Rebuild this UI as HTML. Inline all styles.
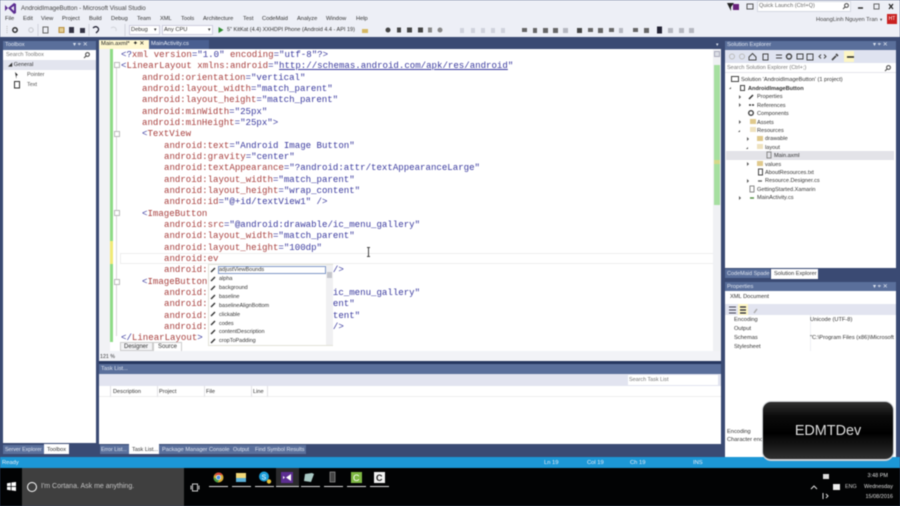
<!DOCTYPE html>
<html><head><meta charset="utf-8"><style>
html,body{margin:0;padding:0;width:900px;height:506px;overflow:hidden;background:#3a4a73}
*{box-sizing:border-box}
#w{position:relative;width:900px;height:506px;overflow:hidden;font-family:"Liberation Sans",sans-serif;font-size:6px;color:#333;filter:blur(.42px)}
.b,.t,.c,svg{position:absolute}
.t{white-space:pre;line-height:10px}
.c{white-space:pre;font-family:"Liberation Mono",monospace;font-size:9.08px;line-height:11px;color:#a8403f}
.c i{font-style:normal;color:#3a3a9e}
.w{color:#e8edf6}
.h{color:#dfe5f0}
</style></head><body><div id="w">
<!-- top chrome -->
<div class="b" style="left:0;top:0;width:900px;height:37px;background:#edeff6"></div>
<svg style="left:2px;top:0" width="16" height="16" viewBox="0 0 16 16"><path d="M3 5l3 3-3 3zM6 8l6-5 2 1v9l-2 1zM12 6v5L9 8z" fill="#5c2d91" fill-rule="evenodd"/></svg>
<div class="t" style="left:21px;top:4px;font-size:6.2px;color:#444">AndroidImageButton - Microsoft Visual Studio</div>
<div class="t" style="left:5px;top:14px;color:#333;font-size:5.7px">File</div>
<div class="t" style="left:23px;top:14px;font-size:5.7px">Edit</div>
<div class="t" style="left:41px;top:14px;font-size:5.7px">View</div>
<div class="t" style="left:62px;top:14px;font-size:5.7px">Project</div>
<div class="t" style="left:89px;top:14px;font-size:5.7px">Build</div>
<div class="t" style="left:111px;top:14px;font-size:5.7px">Debug</div>
<div class="t" style="left:137px;top:14px;font-size:5.7px">Team</div>
<div class="t" style="left:160px;top:14px;font-size:5.7px">XML</div>
<div class="t" style="left:181px;top:14px;font-size:5.7px">Tools</div>
<div class="t" style="left:203px;top:14px;font-size:5.7px">Architecture</div>
<div class="t" style="left:243px;top:14px;font-size:5.7px">Test</div>
<div class="t" style="left:262px;top:14px;font-size:5.7px">CodeMaid</div>
<div class="t" style="left:297px;top:14px;font-size:5.7px">Analyze</div>
<div class="t" style="left:326px;top:14px;font-size:5.7px">Window</div>
<div class="t" style="left:356px;top:14px;font-size:5.7px">Help</div>
<!-- toolbar -->
<svg style="left:0;top:23px" width="720" height="14" viewBox="0 0 720 14">
<path d="M7 3v8" stroke="#bbb" stroke-dasharray="1 1"/>
<g fill="none" stroke="#555" stroke-width="1">
<circle cx="15" cy="7" r="2.200" stroke-width="1.500" stroke="#333"/><circle cx="31" cy="7" r="2.200" stroke="#c4c6cc"/>
<rect x="43" y="4" width="5" height="6" stroke="#666"/><rect x="59" y="4.500" width="5" height="5" stroke="#b78d3a" fill="#e3cd93"/><rect x="69" y="4" width="5" height="6" fill="#334" stroke="none"/><rect x="80" y="5" width="5" height="5" fill="#334" stroke="none"/>
<path d="M93 5c3-3 7 0 5 3l-2 2" stroke="#223" stroke-width="1.300"/><path d="M111 5c3-2 6 0 5 3" stroke="#d0d2d8"/>
<path d="M38 1v12M89 1v12M125 1v12" stroke="#c4c6d0" stroke-width=".7"/>
</g>
<path d="M218.500 4l5 3-5 3z" fill="#2d8a2d"/>
<path d="M362 6h6v4h-6z" fill="#d6b864"/>
<g fill="#444"><circle cx="388" cy="7" r="2.500"/><rect x="397" y="4.500" width="4" height="5"/><rect x="407" y="4.500" width="5" height="5"/><rect x="418" y="4.500" width="5" height="5"/><rect x="428" y="4.500" width="4" height="5" fill="#888"/><circle cx="440" cy="7" r="2.500" fill="#888"/></g>
<g fill="#d0d3dc"><rect x="460" y="5" width="4" height="5"/><rect x="471" y="5" width="4" height="5"/><rect x="481" y="5" width="4" height="5"/><rect x="491" y="5" width="4" height="5"/><rect x="501" y="5" width="4" height="5"/></g>
<g fill="#666"><rect x="522" y="5" width="5" height="4"/><rect x="533" y="5" width="4" height="5"/><rect x="543" y="5" width="5" height="5"/><rect x="553" y="5" width="5" height="5"/><rect x="563" y="5" width="5" height="5" fill="#b5b7c0"/><rect x="577" y="5" width="5" height="5" fill="#444"/><rect x="588" y="5" width="5" height="4"/><rect x="598" y="5" width="5" height="5"/><rect x="609" y="5" width="5" height="4"/><rect x="619" y="5" width="4" height="5" fill="#b5b7c0"/><rect x="633" y="5" width="5" height="4"/><rect x="644" y="5" width="5" height="5"/><rect x="657" y="3.500" width="5" height="7" fill="#223"/><rect x="668" y="5" width="5" height="5" fill="#b5b7c0"/><rect x="679" y="5" width="5" height="5" fill="#b5b7c0"/><rect x="689" y="5" width="5" height="5" fill="#b5b7c0"/></g>
</svg>
<div class="b" style="left:129px;top:25px;width:31px;height:10px;background:#fff;border:1px solid #ccd"></div>
<div class="t" style="left:131px;top:25px;font-size:5.7px">Debug</div>
<div class="t" style="left:154px;top:25px;font-size:5px">▾</div>
<div class="b" style="left:162px;top:25px;width:51px;height:10px;background:#fff;border:1px solid #ccd"></div>
<div class="t" style="left:164px;top:25px;font-size:5.7px">Any CPU</div>
<div class="t" style="left:208px;top:25px;font-size:5px">▾</div>
<div class="t" style="left:227px;top:25px;font-size:5.5px">5" KitKat (4.4) XXHDPI Phone (Android 4.4 - API 19)</div>
<!-- right title -->
<svg style="left:725px;top:1px" width="175" height="12" viewBox="0 0 175 12"><path d="M2 2h7L6 6v4L5 8z" fill="#222"/><rect x="8" y="3" width="6" height="6" fill="#68217a"/><rect x="22" y="3" width="6" height="5" fill="none" stroke="#555"/><circle cx="120" cy="4.500" r="1.800" fill="none" stroke="#444"/><path d="M119 6l-2 2" stroke="#444"/><path d="M133 7h5" stroke="#222" stroke-width="1.400"/><rect x="149" y="3" width="5" height="5" fill="none" stroke="#666"/><path d="M164 3l4 5m0-5l-4 5" stroke="#222" stroke-width="1.200"/></svg>
<div class="b" style="left:757px;top:1px;width:94px;height:11px;background:#fff;border:1px solid #d5d8e2;z-index:0"></div>
<svg style="left:842px;top:2px" width="8" height="8" viewBox="0 0 8 8"><circle cx="4.500" cy="3.500" r="1.900" fill="none" stroke="#444"/><path d="M3 5L1 7" stroke="#444"/></svg>
<div class="t" style="left:759px;top:1px;font-size:5.6px;color:#666">Quick Launch (Ctrl+Q)</div>
<div class="t" style="left:816px;top:15px;font-size:5.7px;color:#444">HoangLinh Nguyen Tran</div>
<div class="t" style="left:880px;top:15px;font-size:4.500px;color:#444">▾</div>
<div class="b" style="left:887px;top:14px;width:10px;height:10px;background:#c9201f;color:#fff;font-size:5px;text-align:center;line-height:10px">HT</div>
<!-- toolbox -->
<div class="b" style="left:3px;top:41px;width:93px;height:402px;background:#fff"></div>
<div class="b" style="left:3px;top:41px;width:93px;height:9px;background:#5a6f9b"></div>
<div class="t h" style="left:5px;top:40px;font-size:5.7px">Toolbox</div>
<div class="t h" style="left:73px;top:40px;font-size:6px">▾ ⌖ ✕</div>
<div class="t" style="left:6px;top:50px;font-size:5.5px;color:#777">Search Toolbox</div>
<svg style="left:83px;top:51px" width="8" height="8" viewBox="0 0 8 8"><circle cx="4.500" cy="3.500" r="1.900" fill="none" stroke="#444"/><path d="M3 5L1 7" stroke="#444"/></svg>
<div class="b" style="left:3px;top:60px;width:93px;height:10px;background:#e3e5ef"></div>
<div class="t" style="left:8px;top:60px;font-size:5.5px">◢ General</div>
<div class="t" style="left:27px;top:70px;font-size:5.5px;color:#555">Pointer</div>
<div class="t" style="left:27px;top:80px;font-size:5.5px;color:#555">Text</div>
<svg style="left:13px;top:71px" width="8" height="22" viewBox="0 0 8 22"><path d="M2 1l3 3-1.500.5V8z" fill="#222"/><rect x="1.500" y="10.500" width="5" height="6.500" fill="none" stroke="#333"/></svg>
<!-- editor tabs -->
<div class="b" style="left:99px;top:40px;width:50px;height:9px;background:#fff8d0"></div>
<div class="t" style="left:101px;top:39px;font-size:5.8px;color:#222">Main.axml*  ✦ ✕</div>
<div class="b" style="left:149px;top:40px;width:60px;height:9px;background:#4a5f90"></div>
<div class="t w" style="left:151px;top:39px;font-size:5.8px">MainActivity.cs</div>
<div class="t h" style="left:716px;top:40px;font-size:5px">▾</div>
<!-- editor -->
<div class="b" style="left:99px;top:49px;width:622px;height:312px;background:#fff"></div>
<div class="b" style="left:99px;top:49px;width:11px;height:302px;background:#f1f2f5"></div>
<div class="b" style="left:110px;top:49px;width:3px;height:293px;background:#8edb86"></div>
<div class="b" style="left:110px;top:241px;width:3px;height:23px;background:#f0ea76"></div>
<div class="b" style="left:120px;top:253px;width:594px;height:11px;border:1px solid #eeeeee"></div>
<div class="b" style="left:116px;top:66px;width:1px;height:270px;background:#d8d8d8"></div>
<div class="b" style="left:114px;top:62px;width:6px;height:6px;background:#fff;border:1px solid #bbb"></div>
<div class="b" style="left:114px;top:131px;width:6px;height:6px;background:#fff;border:1px solid #bbb"></div>
<div class="b" style="left:114px;top:210px;width:6px;height:6px;background:#fff;border:1px solid #bbb"></div>
<div class="b" style="left:114px;top:279px;width:6px;height:6px;background:#fff;border:1px solid #bbb"></div>
<!-- code -->
<div class="c" style="left:121px;top:49px"><i>&lt;?</i>xml version<i>="1.0"</i> encoding<i>="utf-8"?&gt;</i></div>
<div class="c" style="left:121px;top:60px"><i>&lt;</i>LinearLayout xmlns:android<i>="<u>http://schemas.android.com/apk/res/android</u>"</i></div>
<div class="c" style="left:142px;top:71.500px">android:orientation<i>="vertical"</i></div>
<div class="c" style="left:142px;top:83px">android:layout_width<i>="match_parent"</i></div>
<div class="c" style="left:142px;top:94px">android:layout_height<i>="match_parent"</i></div>
<div class="c" style="left:142px;top:105.500px">android:minWidth<i>="25px"</i></div>
<div class="c" style="left:142px;top:117px">android:minHeight<i>="25px"&gt;</i></div>
<div class="c" style="left:142px;top:128px"><i>&lt;</i>TextView</div>
<div class="c" style="left:164px;top:139.500px">android:text<i>="Android Image Button"</i></div>
<div class="c" style="left:164px;top:151px">android:gravity<i>="center"</i></div>
<div class="c" style="left:164px;top:162px">android:textAppearance<i>="?android:attr/textAppearanceLarge"</i></div>
<div class="c" style="left:164px;top:173.500px">android:layout_width<i>="match_parent"</i></div>
<div class="c" style="left:164px;top:185px">android:layout_height<i>="wrap_content"</i></div>
<div class="c" style="left:164px;top:196px">android:id<i>="@+id/textView1" /&gt;</i></div>
<div class="c" style="left:142px;top:207.500px"><i>&lt;</i>ImageButton</div>
<div class="c" style="left:164px;top:219px">android:src<i>="@android:drawable/ic_menu_gallery"</i></div>
<div class="c" style="left:164px;top:230px">android:layout_width<i>="match_parent"</i></div>
<div class="c" style="left:164px;top:241.500px">android:layout_height<i>="100dp"</i></div>
<div class="c" style="left:164px;top:253px">android:ev</div>
<div class="c" style="left:164px;top:264px">android:                       <i>/&gt;</i></div>
<div class="c" style="left:142px;top:275.500px"><i>&lt;</i>ImageButton</div>
<div class="c" style="left:164px;top:287px">android:                       <i>ic_menu_gallery"</i></div>
<div class="c" style="left:164px;top:298px">android:                       <i>ent"</i></div>
<div class="c" style="left:164px;top:309.500px">android:                       <i>tent"</i></div>
<div class="c" style="left:164px;top:321px">android:                       <i>/&gt;</i></div>
<div class="c" style="left:121px;top:332px"><i>&lt;/</i>LinearLayout<i>&gt;</i></div>
<svg style="left:365px;top:247px" width="7" height="10" viewBox="0 0 7 10"><path d="M2 .5h3M2 9.500h3M3.500.5v9" stroke="#444" fill="none"/></svg>
<!-- IntelliSense -->
<div class="b" style="left:208px;top:264px;width:125px;height:82px;background:#fff;border:1px solid #e2e2d8"></div>
<div class="b" style="left:218px;top:266px;width:108px;height:8px;border:1px solid #7e97c7;background:#fff"></div>
<div class="b" style="left:326px;top:265px;width:7px;height:80px;background:#f0f0f2"></div>
<div class="b" style="left:327px;top:272px;width:5px;height:6px;background:#c4c6cc"></div>
<div class="t" style="left:219px;top:265px;font-size:5.5px;color:#333">adjustViewBounds</div>
<div class="t" style="left:219px;top:274px;font-size:5.5px;color:#333">alpha</div>
<div class="t" style="left:219px;top:283px;font-size:5.5px;color:#333">background</div>
<div class="t" style="left:219px;top:292px;font-size:5.5px;color:#333">baseline</div>
<div class="t" style="left:219px;top:300.500px;font-size:5.5px;color:#333">baselineAlignBottom</div>
<div class="t" style="left:219px;top:309.500px;font-size:5.5px;color:#333">clickable</div>
<div class="t" style="left:219px;top:318.500px;font-size:5.5px;color:#333">codes</div>
<div class="t" style="left:219px;top:327px;font-size:5.5px;color:#333">contentDescription</div>
<div class="t" style="left:219px;top:336px;font-size:5.5px;color:#333">cropToPadding</div>
<svg style="left:210px;top:266px" width="7" height="78" viewBox="0 0 7 78"><g stroke="#333" stroke-width="1.400" fill="none"><path d="M1 6l4-4M1 15l4-4M1 24l4-4M1 33l4-4M1 41l4-4M1 50l4-4M1 59l4-4M1 68l4-4M1 77l4-4"/></g></svg>
<!-- designer/source -->
<div class="b" style="left:120px;top:342px;width:33px;height:9px;background:#f4f4f6;border:1px solid #ccc"></div>
<div class="t" style="left:124px;top:342px;font-size:6px">Designer</div>
<div class="b" style="left:153px;top:342px;width:29px;height:10px;background:#fff;border:1px solid #ccc"></div>
<div class="t" style="left:158px;top:342px;font-size:6px">Source</div>
<div class="b" style="left:99px;top:351px;width:622px;height:10px;background:#f2f3f7"></div>
<div class="t" style="left:100px;top:352px;font-size:5.300px">121 %</div>
<!-- scrollbar -->
<div class="b" style="left:713px;top:49px;width:8px;height:302px;background:#f0f1f4"></div>
<div class="b" style="left:714px;top:51px;width:6px;height:6px;background:#dcdfe6;border:1px solid #aab"></div>
<div class="b" style="left:714px;top:65px;width:6px;height:140px;background:#a6dfa0"></div>
<div class="b" style="left:714px;top:160px;width:6px;height:4px;background:#d5d88a"></div>
<!-- task list -->
<div class="b" style="left:99px;top:361px;width:622px;height:83px;background:#fff"></div>
<div class="b" style="left:99px;top:361px;width:622px;height:3px;background:#25365f"></div>
<div class="b" style="left:99px;top:364px;width:622px;height:10px;background:#5a6f9b"></div>
<div class="t h" style="left:101px;top:364px;font-size:5.700px">Task List...</div>
<div class="b" style="left:99px;top:374px;width:622px;height:12px;background:#e2e4f0"></div>
<div class="b" style="left:628px;top:375px;width:90px;height:10px;background:#fff"></div>
<div class="t" style="left:629px;top:375px;font-size:5.400px;color:#777">Search Task List</div>
<div class="b" style="left:99px;top:386px;width:622px;height:11px;background:#fff;border-bottom:1px solid #eee"></div>
<div class="b" style="left:110px;top:386px;width:1px;height:11px;background:#e2e2e6"></div>
<div class="b" style="left:157px;top:386px;width:1px;height:11px;background:#e2e2e6"></div>
<div class="b" style="left:204px;top:386px;width:1px;height:11px;background:#e2e2e6"></div>
<div class="b" style="left:251px;top:386px;width:1px;height:11px;background:#e2e2e6"></div>
<div class="b" style="left:267px;top:386px;width:1px;height:11px;background:#e2e2e6"></div>
<div class="t" style="left:113px;top:387px;font-size:5.600px">Description</div>
<div class="t" style="left:159px;top:387px;font-size:5.600px">Project</div>
<div class="t" style="left:206px;top:387px;font-size:5.600px">File</div>
<div class="t" style="left:253px;top:387px;font-size:5.600px">Line</div>
<!-- bottom tabs -->
<div class="b" style="left:3px;top:445px;width:41px;height:9px;background:#5a6f9b"></div>
<div class="t h" style="left:5px;top:445px;font-size:5.300px">Server Explorer</div>
<div class="b" style="left:44px;top:444px;width:25px;height:10px;background:#fff"></div>
<div class="t" style="left:47px;top:444.500px;font-size:5.500px">Toolbox</div>
<div class="b" style="left:100px;top:445px;width:206px;height:9px;background:#5a6f9b"></div>
<div class="t h" style="left:101px;top:445px;font-size:5.300px">Error List...</div>
<div class="b" style="left:129px;top:444px;width:30px;height:10px;background:#fff"></div>
<div class="t" style="left:132px;top:444.500px;font-size:5.500px">Task List...</div>
<div class="t h" style="left:162px;top:445px;font-size:5.600px">Package Manager Console</div>
<div class="t h" style="left:233px;top:445px;font-size:5.400px">Output</div>
<div class="t h" style="left:255px;top:445px;font-size:5.400px">Find Symbol Results</div>
<!-- solution explorer -->
<div class="b" style="left:725px;top:41px;width:171px;height:227px;background:#fff"></div>
<div class="b" style="left:725px;top:41px;width:171px;height:9px;background:#5a6f9b"></div>
<div class="t h" style="left:727px;top:40px;font-size:5.800px">Solution Explorer</div>
<div class="t h" style="left:873px;top:40px;font-size:6px">▾ ⌖ ✕</div>
<div class="b" style="left:725px;top:50px;width:171px;height:13px;background:#dfe3f0"></div>
<div class="b" style="left:844px;top:51px;width:10px;height:11px;background:#fdf6c4"></div>
<svg style="left:727px;top:51px" width="130" height="11" viewBox="0 0 130 11"><g fill="none" stroke="#444" stroke-width="1"><circle cx="5" cy="5.500" r="2.500" stroke="#bbb"/><circle cx="15" cy="5.500" r="2.500" stroke="#bbb"/><path d="M22 6l3.500-3.500L29 6v3h-7z"/><rect x="36" y="3" width="5" height="6"/><path d="M49 4h6M49 7h6"/><circle cx="62" cy="5.500" r="2.500" stroke-width="1.400"/><rect x="70" y="3" width="6" height="5"/><rect x="80" y="3" width="6" height="6"/><path d="M94 3.500l-2 2 2 2M97 3.500l2 2-2 2"/><path d="M105 9l4-4M109 3l2 2"  stroke-width="1.600"/><path d="M120 6h7" stroke="#222" stroke-width="1.500"/></g></svg>
<div class="b" style="left:725px;top:63px;width:171px;height:10px;background:#fff;border-bottom:1px solid #e6e6ec"></div>
<div class="t" style="left:727px;top:63px;font-size:5.500px;color:#777">Search Solution Explorer (Ctrl+;)</div>
<svg style="left:884px;top:64px" width="8" height="8" viewBox="0 0 8 8"><circle cx="4.500" cy="3.500" r="1.900" fill="none" stroke="#444"/><path d="M3 5L1 7" stroke="#444"/></svg>
<div class="b" style="left:726px;top:151px;width:168px;height:9px;background:#e3e3e8"></div>
<svg style="left:725px;top:74px" width="60" height="128" viewBox="0 0 60 128">
<g fill="#e0c98c"><rect x="25" y="45" width="6" height="5"/><rect x="25" y="53" width="6" height="5" fill="#efe2bf"/><rect x="32" y="62" width="6" height="5"/><rect x="32" y="70" width="6" height="5" fill="#efe2bf"/><rect x="32" y="87" width="6" height="5"/></g>
<g fill="none" stroke="#444"><rect x="6.500" y="2.500" width="7" height="5"/><rect x="15.500" y="11.500" width="4" height="5"/><rect x="42" y="78" width="4" height="6" stroke="#888"/><rect x="33.500" y="95" width="4" height="6"/><rect x="25" y="112" width="4" height="6" stroke="#888"/><circle cx="26" cy="39" r="2.300" stroke-width="1.400"/></g>
<path d="M24 25l4-4" stroke="#333" stroke-width="1.500"/><path d="M24 31h5" stroke="#333" stroke-width="1.500" stroke-dasharray="2 1"/>
<path d="M33 107h4" stroke="#666" stroke-width="1.400"/><path d="M25 124h4" stroke="#4a8a3a" stroke-width="1.400"/>
<g fill="#555"><path d="M4 15l2-2v2zM14 21l2 2-2 2zM14 29l2 2-2 2zM14 46l2 2-2 2zM22 63l2 2-2 2zM22 88l2 2-2 2zM22 105l2 2-2 2zM14 122l2 2-2 2zM13 58l2-2v2zM21 75l2-2v2z"/></g></svg>
<div class="t" style="left:741px;top:74.500px;font-size:5.600px">Solution 'AndroidImageButton' (1 project)</div>
<div class="t" style="left:748px;top:83.500px;font-size:5.600px;font-weight:bold">AndroidImageButton</div>
<div class="t" style="left:757px;top:92px;font-size:5.600px">Properties</div>
<div class="t" style="left:757px;top:100.500px;font-size:5.600px">References</div>
<div class="t" style="left:757px;top:108.500px;font-size:5.600px">Components</div>
<div class="t" style="left:757px;top:117.500px;font-size:5.600px">Assets</div>
<div class="t" style="left:757px;top:125.500px;font-size:5.600px">Resources</div>
<div class="t" style="left:765px;top:134px;font-size:5.600px">drawable</div>
<div class="t" style="left:765px;top:142.500px;font-size:5.600px">layout</div>
<div class="t" style="left:774px;top:151px;font-size:5.600px">Main.axml</div>
<div class="t" style="left:765px;top:159.500px;font-size:5.600px">values</div>
<div class="t" style="left:765px;top:167.500px;font-size:5.600px">AboutResources.txt</div>
<div class="t" style="left:765px;top:176px;font-size:5.600px">Resource.Designer.cs</div>
<div class="t" style="left:757px;top:184.500px;font-size:5.600px">GettingStarted.Xamarin</div>
<div class="t" style="left:757px;top:193px;font-size:5.600px">MainActivity.cs</div>
<!-- se tabs -->
<div class="b" style="left:725px;top:269px;width:45px;height:9px;background:#5a6f9b"></div>
<div class="t h" style="left:727px;top:269px;font-size:5.500px">CodeMaid Spade</div>
<div class="b" style="left:771px;top:269px;width:47px;height:10px;background:#fff"></div>
<div class="t" style="left:774px;top:269px;font-size:5.600px">Solution Explorer</div>
<!-- properties -->
<div class="b" style="left:725px;top:282px;width:171px;height:175px;background:#fff"></div>
<div class="b" style="left:725px;top:282px;width:171px;height:9px;background:#5a6f9b"></div>
<div class="t h" style="left:727px;top:282px;font-size:5.800px">Properties</div>
<div class="t h" style="left:873px;top:282px;font-size:6px">▾ ⌖ ✕</div>
<div class="t" style="left:730px;top:292px;font-size:5.700px">XML Document</div>
<div class="b" style="left:725px;top:304px;width:171px;height:11px;background:#e2e4f0"></div>
<div class="b" style="left:738px;top:304px;width:10px;height:11px;background:#fdf6c4"></div>
<svg style="left:728px;top:305px" width="32" height="10" viewBox="0 0 32 10"><path d="M1 2h7M1 5h7M1 8h7" stroke="#445" stroke-width="1"/><path d="M12 2h6M12 5h6M12 8h6" stroke="#223" stroke-width="1.200"/><path d="M26 8l3-4" stroke="#aaa" stroke-width="1.400"/></svg>
<div class="b" style="left:810px;top:315px;width:1px;height:36px;background:#eef0f4"></div>
<div class="t" style="left:734px;top:315px;font-size:5.700px">Encoding</div>
<div class="t" style="left:810px;top:315px;font-size:5.700px">Unicode (UTF-8)</div>
<div class="t" style="left:734px;top:324px;font-size:5.700px">Output</div>
<div class="t" style="left:734px;top:333px;font-size:5.700px">Schemas</div>
<div class="t" style="left:810px;top:333px;font-size:5.700px;width:84px;overflow:hidden">"C:\Program Files (x86)\Microsoft V</div>
<div class="t" style="left:734px;top:342px;font-size:5.700px">Stylesheet</div>
<div class="t" style="left:727px;top:427px;font-size:5.700px">Encoding</div>
<div class="t" style="left:727px;top:435px;font-size:5.700px">Character enc</div>
<!-- status -->
<div class="b" style="left:0;top:457px;width:900px;height:11px;background:#1c97d6"></div>
<div class="t w" style="left:2px;top:458px;font-size:5.800px">Ready</div>
<div class="t w" style="left:544px;top:458px;font-size:5.800px">Ln 19</div>
<div class="t w" style="left:587px;top:458px;font-size:5.800px">Col 19</div>
<div class="t w" style="left:630px;top:458px;font-size:5.800px">Ch 19</div>
<div class="t w" style="left:693px;top:458px;font-size:5.800px">INS</div>
<!-- taskbar -->
<div class="b" style="left:0;top:468px;width:900px;height:38px;background:#020304"></div>
<svg style="left:7px;top:482px" width="9" height="9" viewBox="0 0 9 9"><path d="M0 1.300l3.800-.7v3.500H0zM4.500.5L9 0v4.100H4.500zM0 4.900h3.800v3.500L0 7.700zM4.500 4.900H9V9l-4.500-.6z" fill="#fff"/></svg>
<div class="b" style="left:22px;top:468px;width:162px;height:38px;background:#3f3f3f"></div>
<div class="b" style="left:27px;top:482px;width:10px;height:10px;border:1.500px solid #fff;border-radius:50%"></div>
<div class="t" style="left:41px;top:482px;font-size:7px;color:#c4c4c4">I'm Cortana. Ask me anything.</div>
<svg style="left:190px;top:483px" width="10" height="9" viewBox="0 0 10 9"><rect x="2.500" y="1" width="5" height="7" fill="none" stroke="#ccc"/><path d="M1 2.500v4M9 2.500v4" stroke="#ccc"/></svg>
<div class="b" style="left:276px;top:468px;width:23px;height:18px;background:#2a2a2c"></div>
<svg style="left:208px;top:470px" width="185" height="18" viewBox="0 0 185 18">
<circle cx="10.500" cy="7.500" r="5" fill="#d8ae35"/><path d="M10.500 2.500a5 5 0 0 1 4.300 2.500h-4.300L6.500 5.500A5 5 0 0 1 10.500 2.500z" fill="#d9453b"/><path d="M5.500 7.500a5 5 0 0 0 4 5l2-3z" fill="#4aa04a"/><circle cx="10.500" cy="7.500" r="2.200" fill="#4a8ee6" stroke="#fff" stroke-width=".7"/>
<rect x="28" y="3" width="10" height="9" fill="#f2d878"/><rect x="28" y="8" width="10" height="4" fill="#5ab0d8"/>
<circle cx="56" cy="6.500" r="5" fill="#1c9ed8"/><text x="53.500" y="9.500" font-size="7" fill="#fff" font-family="Liberation Sans">S</text><circle cx="61" cy="11.500" r="2.200" fill="#e8c33a"/>
<rect x="73" y="2" width="12" height="11" fill="#5c2d91"/><path d="M75 6l2 1.500-2 1.500zM83 4v7l-5-3.500z" fill="#fff"/>
<path d="M97 4l7-1 2 1-3 8-7-1z" fill="#a9c9c4"/>
<rect x="122" y="2" width="5" height="10" fill="#444" stroke="#aaa" stroke-width=".6"/>
<rect x="143" y="2" width="11" height="11" fill="#7eb843"/><text x="145" y="11" font-size="9" fill="#fff" font-family="Liberation Sans">C</text>
<rect x="166" y="2" width="11" height="11" fill="#f2f2f2"/><text x="168" y="11" font-size="9" fill="#222" font-weight="bold" font-family="Liberation Sans">C</text>
</svg>
<svg style="left:209px;top:486px" width="182" height="2" viewBox="0 0 182 2"><g fill="#ddd"><rect width="19" height="1"/><rect x="23" width="19" height="1"/><rect x="46" width="19" height="1"/><rect x="67" width="23" height="1"/><rect x="92" width="19" height="1"/><rect x="115" width="19" height="1"/><rect x="138" width="19" height="1"/><rect x="161" width="19" height="1"/></g></svg>
<svg style="left:808px;top:472px" width="50" height="32" viewBox="0 0 50 32"><rect x="15" y="2" width="6" height="5" fill="#ddd"/><path d="M3 17l3-3 3 3" fill="none" stroke="#ddd"/><rect x="25" y="12" width="7" height="6" fill="#eee"/><path d="M15 21v6M18 22l2 2-2 2" stroke="#ddd" fill="none"/></svg>
<div class="t" style="left:845px;top:482px;font-size:5.400px;color:#ccc">ENG</div>
<div class="t" style="left:860px;top:471px;font-size:5.500px;color:#ddd;width:28px;text-align:right">3:48 PM</div>
<div class="t" style="left:860px;top:482px;font-size:5.500px;color:#ddd;width:33px;text-align:right">Wednesday</div>
<div class="t" style="left:860px;top:492px;font-size:5.500px;color:#ddd;width:33px;text-align:right">15/08/2016</div>
<!-- watermark -->
<div class="b" style="left:762px;top:401px;width:132px;height:60px;border-radius:9px;border:1.500px solid #cfd2d6;background:linear-gradient(#303030,#0b0b0b 25%,#000 55%,#303030);border-bottom-width:2px"></div>
<div class="t" style="left:762px;top:424px;width:132px;text-align:center;font-size:14.400px;line-height:14px;color:#dedede">EDMTDev</div>
</div></body></html>
